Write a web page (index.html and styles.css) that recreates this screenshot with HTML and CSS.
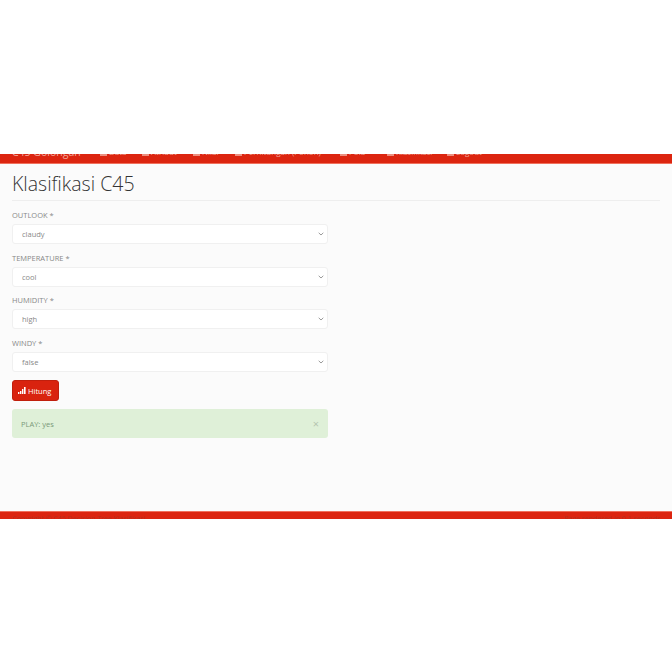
FILE: index.html
```html
<!DOCTYPE html>
<html lang="en">
<head>
  <meta charset="UTF-8">
  <title>Klasifikasi C45</title>
  <link rel="stylesheet" href="styles.css">
</head>
<body>
  <nav class="navbar">
    <span class="brand">C45 Golongan</span>
    <span class="nav-item w1"><i class="nav-icon"></i>Data</span>
    <span class="nav-item w2"><i class="nav-icon"></i>Atribut</span>
    <span class="nav-item w3"><i class="nav-icon"></i>Nilai</span>
    <span class="nav-item w4"><i class="nav-icon"></i>Perhitungan (Pohon)</span>
    <span class="nav-item w5"><i class="nav-icon"></i>Pola</span>
    <span class="nav-item w6"><i class="nav-icon"></i>Klasifikasi</span>
    <span class="nav-item"><i class="nav-icon"></i>Logout</span>
  </nav>

  <main class="content">
    <h1 class="title">Klasifikasi C45</h1>
    <form class="form">
      <div class="field">
        <label>OUTLOOK <span>*</span></label>
        <select><option>claudy</option></select>
      </div>
      <div class="field">
        <label>TEMPERATURE <span>*</span></label>
        <select><option>cool</option></select>
      </div>
      <div class="field">
        <label>HUMIDITY <span>*</span></label>
        <select><option>high</option></select>
      </div>
      <div class="field">
        <label>WINDY <span>*</span></label>
        <select><option>false</option></select>
      </div>
      <button type="button" class="btn">
        <svg width="8" height="7" viewBox="0 0 8 7" fill="#fff"><rect x="0" y="5" width="1.4" height="2"/><rect x="2" y="4" width="1.4" height="3"/><rect x="4" y="2" width="1.4" height="5"/><rect x="6" y="0" width="1.6" height="7"/></svg>
        Hitung
      </button>
      <div class="alert">
        <span>PLAY: yes</span>
        <span class="close">&times;</span>
      </div>
    </form>
  </main>

  <footer class="footer">
    <span>Copyright &copy; C45 Decision Tree Klasifikasi</span>
    <span>Page rendered in 0.1 seconds</span>
  </footer>
</body>
</html>
```

FILE: styles.css
```css
* {
  box-sizing: border-box;
}
body {
  margin: 0;
  padding-top: 154px;
  background-color: #fff;
  font-family: "Open Sans", Arial, sans-serif;
  color: #555;
}
.navbar {
  display: flex;
  align-items: flex-end;
  height: 10px;
  padding: 0 12px 5px;
  overflow: hidden;
  background-color: #dc2510;
  border-bottom: 1px solid #f0705c;
  color: #f2a89c;
  font-size: 8px;
  line-height: 12px;
  white-space: nowrap;
}
.brand {
  width: 88px;
  flex: none;
  font-size: 10.5px;
}
.nav-item {
  flex: none;
  display: flex;
  align-items: flex-end;
  gap: 2px;
}
.w1 { width: 42px; }
.w2 { width: 51px; }
.w3 { width: 42px; }
.w4 { width: 105px; }
.w5 { width: 47px; }
.w6 { width: 60px; }
.nav-icon {
  width: 7px;
  height: 7px;
  margin-bottom: 2px;
  background-color: #ec8f80;
}
.content {
  height: 347px;
  padding: 8px 12px 0;
  background-color: #fbfbfb;
}
.title {
  margin: 0;
  padding-bottom: 4px;
  border-bottom: 1px solid #eee;
  font-size: 19.5px;
  line-height: 24px;
  font-weight: 300;
  color: #333;
}
.form {
  width: 316px;
  margin-top: 9px;
}
.field {
  margin-bottom: 8.5px;
}
.field label {
  display: block;
  height: 13px;
  margin-bottom: 1px;
  font-size: 7.5px;
  line-height: 10px;
  color: #888;
}
.field label span {
  color: #888;
}
.field select {
  display: block;
  width: 100%;
  height: 20px;
  padding: 0 9px;
  appearance: none;
  background: #fff url("data:image/svg+xml,%3Csvg xmlns='http://www.w3.org/2000/svg' width='6' height='4'%3E%3Cpath d='M.7.8 3 3l2.3-2.2' fill='none' stroke='%23999' stroke-width='1'/%3E%3C/svg%3E") no-repeat right 3px center;
  border: 1px solid #f0f0f0;
  border-radius: 3px;
  font-family: inherit;
  font-size: 7.5px;
  color: #888;
}
.btn {
  display: flex;
  align-items: center;
  gap: 2px;
  height: 21px;
  padding: 0 7px 0 5px;
  background-color: #d9230f;
  border: 1px solid #c01f0d;
  border-radius: 3px;
  color: #fff;
  font-family: inherit;
  font-size: 7.5px;
}
.alert {
  display: flex;
  justify-content: space-between;
  align-items: center;
  height: 29px;
  margin-top: 8px;
  padding: 0 9px;
  background-color: #dff0d8;
  border-radius: 3px;
  font-size: 7.5px;
  color: #7a9a78;
}
.close {
  font-size: 11px;
  color: #b5c4b0;
}
.footer {
  display: flex;
  justify-content: space-between;
  align-items: flex-start;
  height: 8px;
  padding: 2px 12px 0;
  overflow: hidden;
  background-color: #dc2510;
  border-top: 1px solid #f0705c;
  color: #b8301c;
  font-size: 7px;
  line-height: 10px;
}
```
